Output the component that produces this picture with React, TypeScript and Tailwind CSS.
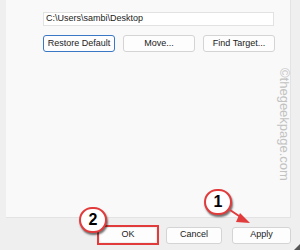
const font = { fontFamily: '"Liberation Sans", Arial, sans-serif' };

function Callout({ n }: { n: string }) {
  return (
    <div className="w-[28px] h-[26px] rounded-full bg-white border-[2.5px] border-[#e23b3b] shadow-[1px_2px_2px_rgba(0,0,0,0.55)] flex items-center justify-center">
      <span className="text-[16px] font-bold text-black leading-none">{n}</span>
    </div>
  );
}

export default function App() {
  return (
    <div
      className="w-[300px] h-[250px] bg-[#efefef] flex flex-col relative overflow-hidden text-[9px] text-[#222]"
      style={font}
    >
      <div className="ml-[6px] w-[285px] h-[218px] bg-[#f9f9f9] border-r border-b border-[#e3e3e3] pl-[37px] pt-[12px] relative">
        <div className="w-[231px] h-[14px] bg-white border border-[#e2e2e2] flex items-center pl-[2px]">
          C:\Users\sambi\Desktop
        </div>
        <div className="flex gap-[8px] mt-[9px]">
          <div className="w-[72px] h-[17px] rounded-[3px] bg-[#fdfdfd] border border-[#3a78c6] flex items-center justify-center">
            Restore Default
          </div>
          <div className="w-[72px] h-[17px] rounded-[3px] bg-[#fdfdfd] border border-[#d4d4d4] flex items-center justify-center">
            Move...
          </div>
          <div className="w-[72px] h-[17px] rounded-[3px] bg-[#fdfdfd] border border-[#d4d4d4] flex items-center justify-center">
            Find Target...
          </div>
        </div>
        <div className="absolute left-[285px] top-[68px] origin-top-left rotate-90 whitespace-nowrap text-[13px] leading-none text-[#c2c2c2]">
          ©thegeekpage.com
        </div>
      </div>

      <div className="flex items-center mt-[7px] pl-[97px]">
        <div className="w-[62px] h-[20px] border-2 border-[#e23b3b] flex items-center justify-center p-[1px]">
          <div className="w-full h-full rounded-[2px] bg-[#fdfdfd] flex items-center justify-center">
            OK
          </div>
        </div>
        <div className="ml-[7px] w-[56px] h-[17px] rounded-[3px] bg-[#fdfdfd] border border-[#d4d4d4] flex items-center justify-center">
          Cancel
        </div>
        <div className="ml-[10px] w-[59px] h-[17px] rounded-[3px] bg-[#fdfdfd] border border-[#d4d4d4] flex items-center justify-center">
          Apply
        </div>
      </div>

      <div className="absolute left-[79px] top-[207px]">
        <Callout n="2" />
      </div>
      <div className="absolute left-[204px] top-[189px]">
        <Callout n="1" />
      </div>
      <svg className="absolute left-0 top-0" width="300" height="250">
        <path d="M230 210 L242 218" stroke="#e23b3b" strokeWidth="2" fill="none" />
        <path d="M240 213 L250 223 L236 222 Z" fill="#e23b3b" />
        <path d="M294 250 L300 244 L300 250 Z" fill="#555" />
      </svg>
    </div>
  );
}
